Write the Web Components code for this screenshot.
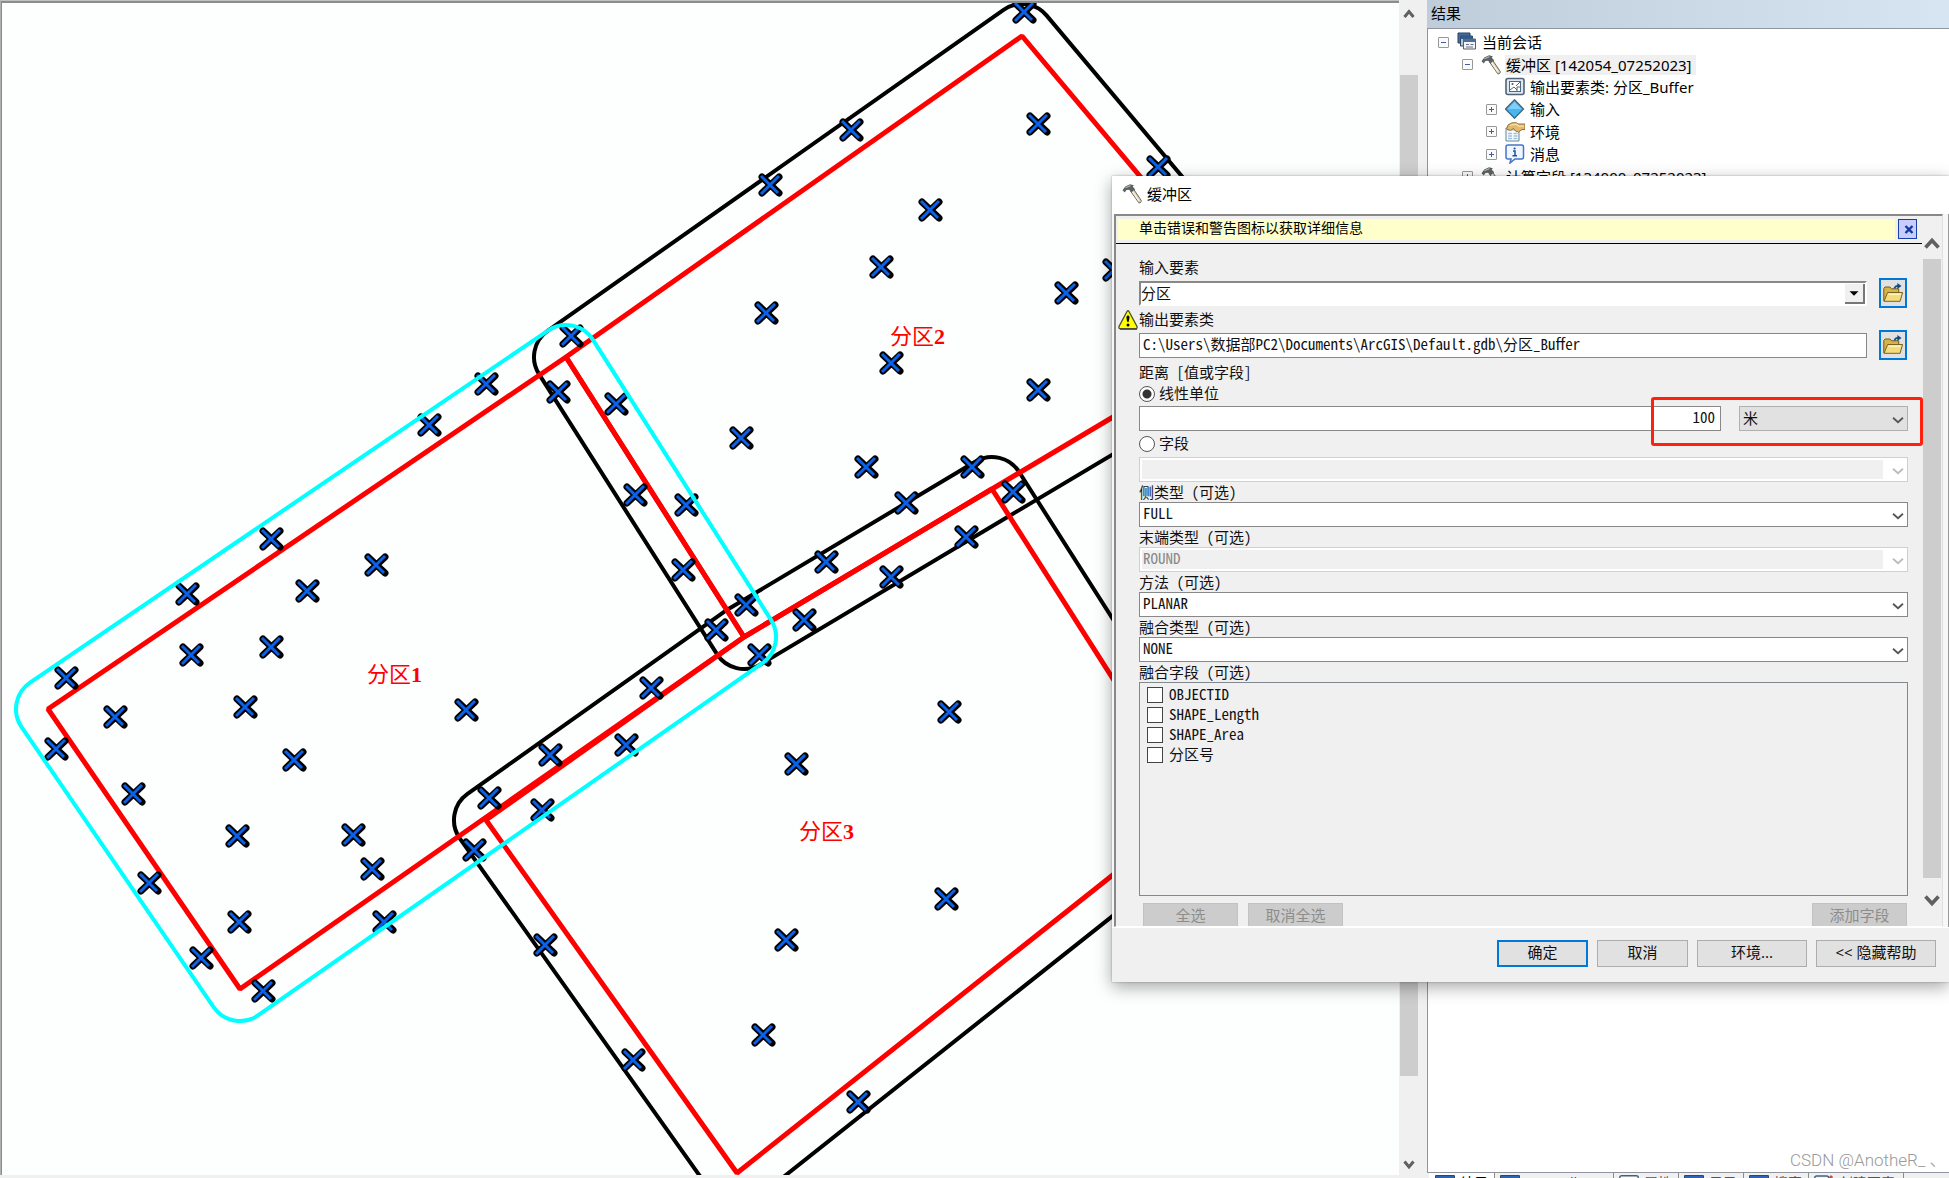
<!DOCTYPE html>
<html lang="zh-CN">
<head>
<meta charset="utf-8">
<title>缓冲区</title>
<style>
html,body{height:100%}
body{margin:0;overflow:hidden;background:#f0f0f0;color:#000;font:15px/20px "Noto Sans","Noto Sans CJK SC",sans-serif}
</style>
</head>
<body>
<gis-workspace></gis-workspace>
<script>
const define=(name,html,setup)=>customElements.define(name,class extends HTMLElement{
  connectedCallback(){
    if(this.shadowRoot)return;
    const root=this.attachShadow({mode:'open'});
    const t=document.createElement('template');
    t.innerHTML=typeof html==='function'?html(this):html;
    root.append(t.content.cloneNode(true));
    if(setup)setup(this,root);
  }
});

/* Icons */
const ICONS={
hammer:`<svg viewBox="0 0 20 20"><path d="M8.500 7l3-2L19.200 16.400c.5 1.400-.9 3-2.400 2.400z" fill="#d8cfb8" stroke="#6d6759"/><path d="M10.500 7.500l6.500 9.500" stroke="#f5f0e2" stroke-width="1.4"/><path d="M.5 6.200L3.300 2.600 8 .3l3.800 1-1 1.400 2.400 2.600-3.600 3-2.600-2.500-2.600.2-1.600 2.600z" fill="#5c6164"/><path d="M3.500 3.800L8.400 1.600" stroke="#a9b0b3" stroke-width="1.2"/></svg>`,
session:`<svg viewBox="0 0 20 20"><path d="M1 1h12v10H1z" fill="#456e9e" stroke="#27415f"/><path d="M3.500 4h12v10h-12z" fill="#b8c6d6" stroke="#33475f"/><path d="M3.500 4h12v3h-12z" fill="#2c5a91"/><path d="M6.500 7h12v10h-12z" fill="#f2f5f8" stroke="#55606b"/><path d="M6.500 7h12v3h-12z" fill="#4a6f9a"/><path d="M9 12.500h3M13.500 12.500h3M9 15h7" stroke="#66717c"/></svg>`,
feature:`<svg viewBox="0 0 20 20"><rect x="1" y="1.500" width="18" height="16" rx="2" fill="#dfe8f0" stroke="#4f6478" stroke-width="1.6"/><rect x="4.500" y="4.500" width="11" height="10" fill="#fff" stroke="#50677f"/><path d="M5 13l4-3 3 3M11 9l4-4M12 14v-4h3" fill="none" stroke="#50677f"/><circle cx="7.500" cy="7" r="1" fill="#40566c"/></svg>`,
diamond:`<svg viewBox="0 0 20 20"><path d="M9.500 .8l9 9.200-9 9.200-9-9.200z" fill="#47b5ee" stroke="#42657b" stroke-width="1.3"/><path d="M9.500 3l6.800 7H2.700z" fill="#7dcffa"/></svg>`,
env:`<svg viewBox="0 0 20 20"><path d="M1 6h13v13H1z" fill="#f7fbff" stroke="#65829d"/><path d="M1 6h13v2.500H1z" fill="#a7cbe6"/><path d="M3 11.500h4M8.500 11.500h4M3 14h4M8.500 14h4M3 16.500h4M8.500 16.500h4" stroke="#9fc3dd" stroke-width="1.3"/><path d="M1.500 7l1.500-4L7 .8h4.500L13 2h7v5.500h-3L13.500 10l-3-1-2-2.500-3 2z" fill="#e3b96c" stroke="#94703a"/><path d="M5 3.500l3-1h4l1.500 1.700h5.500" stroke="#f8e0a9" fill="none" stroke-width="1.300"/></svg>`,
info:`<svg viewBox="0 0 20 20"><path d="M3 1h13.500q2 0 2 2v10q0 2-2 2H10l-5 4 1-4H3q-2 0-2-2V3q0-2 2-2z" fill="#eef6ff" stroke="#4674c6" stroke-width="1.500"/><path d="M8 7h2v4.500M7.500 11.800h4.500" fill="none" stroke="#244f9c" stroke-width="1.500"/><circle cx="9.600" cy="4.500" r="1.100" fill="#244f9c"/></svg>`,
warn:`<svg viewBox="0 0 20 20"><path d="M9 1.500Q10 0 11 1.500l8 15q.5 2-1 2.200H2Q.5 18.500 1 16.500z" fill="#ff0" stroke="#4a4a2a" stroke-width="1.300"/><path d="M2 19.300h17" stroke="#555" stroke-width="1.300"/><path d="M10 5.500c2.600 0 1.200 4 .6 6.500H9.400C8.800 9.500 7.400 5.500 10 5.500z"/><circle cx="10" cy="15" r="1.500"/></svg>`,
folder:`<svg viewBox="0 0 20 20"><path d="M.8 18V5.500L2 4h5l1.500 1.800h7.200V9" fill="#d7b348" stroke="#705d20"/><path d="M1 18.300L4.600 9.500h15l-2.500 8.800z" fill="#f4dc7c" stroke="#776326"/><path d="M5.500 11.300h12" stroke="#fff3b5" stroke-width="1.500"/><path d="M11.500 5.500C12 3.200 13.500 2.800 15 2.800" fill="none" stroke="#15588f" stroke-width="1.800"/><path d="M14.300 0l4.200 3-4.200 3z" fill="#0d4c83"/></svg>`,
pane:`<svg viewBox="0 0 20 20"><path d="M.5 .5h19v17H.5z" fill="#f3f6f9" stroke="#33485f"/><path d="M1 1h18v5H1z" fill="#2e63b4"/></svg>`,
table:`<svg viewBox="0 0 20 20"><rect x=".7" y=".7" width="18.600" height="17" rx="2" fill="#f5fbff" stroke="#44617b" stroke-width="1.400"/><path d="M4 4h5M11 4h5" stroke="#9dc6de" stroke-width="2"/></svg>`,
edit:`<svg viewBox="0 0 20 20"><rect x=".7" y="1" width="14" height="16" rx="2" fill="#e6f3fb" stroke="#44617b" stroke-width="1.400"/><path d="M4 3v8" stroke="#5185b4" stroke-width="2"/><path d="M11 9l7-8" stroke="#c65046" stroke-width="3"/></svg>`,
chevron:`<svg viewBox="0 0 20 20"><path d="M4.500 7.500l5.500 5 5.500-5" fill="none" stroke="currentColor" stroke-width="2"/></svg>`,
up:`<svg viewBox="0 0 20 20"><path d="M5.500 13L10 7.500l4.500 5.500" fill="none" stroke="#606060" stroke-width="3"/></svg>`,
down:`<svg viewBox="0 0 20 20"><path d="M5.500 7.500L10 13l4.500-5.500" fill="none" stroke="#606060" stroke-width="3"/></svg>`,
bigup:`<svg viewBox="0 0 20 20"><path d="M3.500 14.500l6.500-7 6.500 7" fill="none" stroke="#606060" stroke-width="3.600"/></svg>`,
bigdown:`<svg viewBox="0 0 20 20"><path d="M3.500 6.500l6.500 7 6.500-7" fill="none" stroke="#606060" stroke-width="3.600"/></svg>`,
drop:`<svg viewBox="0 0 20 20"><path d="M5 8h10l-5 5z"/></svg>`,
close:`<svg viewBox="0 0 20 20"><path d="M6.500 6l7 7M13.500 6l-7 7" stroke="#103aa0" stroke-width="2.400"/></svg>`
};
define('ui-icon',el=>`<style>:host{display:block;width:20px;height:20px;flex:none}svg{display:block;width:100%;height:100%}</style>${ICONS[el.getAttribute('name')]}`);

define('scroll-bar',el=>{
  const big=el.hasAttribute('big')?'big':'';
  return `<style>
:host{display:flex;flex-direction:column;width:20px;flex:none;background:#f0f0f0}
.track{flex:1;display:flex;flex-direction:column;padding:0 1px}
.thumb{background:#cdcdcd;height:var(--thumb,100%);margin-top:var(--start,0)}
.top{padding:var(--top,2px 0)}
.bottom{padding:var(--bottom,2px 0)}
</style><div class="top"><ui-icon name="${big}up"></ui-icon></div><div class="track"><div class="thumb"></div></div><div class="bottom"><ui-icon name="${big}down"></ui-icon></div>`;
});

/* Map canvas: partitions, their buffers and the sample points */
const MARKS=[[571,336],[486,384],[558,392],[616,404],[429,425],[635,495],[686,505],[271,539],[376,565],[683,570],[1024,12],[851,130],[1038,124],[770,185],[930,210],[881,267],[766,313],[1066,293],[1114,270],[1158,167],[891,363],[1038,390],[741,438],[866,467],[972,467],[1013,492],[906,503],[966,537],[826,562],[891,577],[187,594],[307,591],[191,655],[271,647],[66,678],[115,717],[245,707],[466,710],[56,749],[294,760],[651,688],[626,745],[550,755],[133,794],[489,798],[542,810],[237,836],[353,835],[474,850],[372,869],[149,883],[239,922],[384,922],[545,945],[201,958],[263,991],[633,1060],[746,605],[804,620],[716,630],[759,655],[949,712],[796,764],[946,899],[786,940],[763,1035],[858,1102]];
const ZONE1=[[48,709],[566,357],[744,637],[240,989]];
const ZONE2=[[566,357],[1022,36],[1266,326],[992,489],[744,637]];
const ZONE3=[[486,820],[744,637],[992,489],[1196,809],[737,1173]];
const ring=z=>'M'+z.map(p=>p.join()).join('L')+'Z';
const buffer=(z,r)=>{
  let d='';
  z.forEach((p,i)=>{
    const q=z[(i+1)%z.length],dx=q[0]-p[0],dy=q[1]-p[1],n=Math.hypot(dx,dy);
    const ox=dy/n*r,oy=-dx/n*r;
    d+=(i?`A${r} ${r} 0 0 1 `:'M')+`${p[0]+ox} ${p[1]+oy}L${q[0]+ox} ${q[1]+oy}`;
    if(i===z.length-1){
      const s=z[1],ex=s[0]-q[0],ey=s[1]-q[1],m=Math.hypot(ex,ey);
      d+=`A${r} ${r} 0 0 1 ${q[0]+ey/m*r} ${q[1]-ex/m*r}Z`;
    }
  });
  return d;
};
define('map-view',()=>`<style>
:host{display:block;min-width:0;flex:1;box-sizing:border-box;border-top:1px solid #c0c0c0;border-left:1px solid #b0b0b0;margin-bottom:3px}
.frame{height:100%;box-sizing:border-box;border-top:2px solid #8c8c8c;border-left:1px solid #8c8c8c;background:#fdfefe}
svg{display:block;width:100%;height:100%}
path{fill:none}
text{fill:#f00;font:bold 22px "Liberation Serif","Noto Sans CJK SC",serif}
.cjk{font-weight:400}
</style><div class="frame"><svg aria-label="地图"><defs><g id="mark"><path d="M-8-8L9 8M9-8L-8 8" stroke="#000" stroke-width="7" stroke-linecap="round"/><path d="M-9-9L8 8M9-9L-9 9" stroke="#0b62e8" stroke-width="3"/></g></defs>
<g transform="translate(-2 -3)">
<g stroke="#000" stroke-width="4"><path d="${buffer(ZONE2,32)}"/><path d="${buffer(ZONE3,32)}"/></g>
<g stroke="#f00" stroke-width="5" stroke-linejoin="bevel"><path d="${ring(ZONE1)}"/><path d="${ring(ZONE2)}"/><path d="${ring(ZONE3)}"/></g>
${MARKS.map(m=>`<use href="#mark" x="${m[0]}" y="${m[1]}"/>`).join('')}
<path d="${buffer(ZONE1,32)}" stroke="#0ff" stroke-width="4"/>
<text x="367" y="682"><tspan class="cjk">分区</tspan>1</text><text x="890" y="344"><tspan class="cjk">分区</tspan>2</text><text x="799" y="839"><tspan class="cjk">分区</tspan>3</text>
</g></svg></div>`);

/* Results panel */
define('tree-row',el=>{
  const level=+el.getAttribute('level')||0,box=el.getAttribute('box');
  return `<style>
:host{display:flex;align-items:center;padding-left:${10+24*level}px;white-space:nowrap}
.box{width:11px;height:11px;box-sizing:border-box;border:1px solid #989898;border-radius:1px;padding:0;margin:0 8px 0 0;background:#fafafa;display:grid;place-items:center;flex:none}
.box[hidden]{display:grid;visibility:hidden}
svg{width:9px;height:9px;display:block}
.text{margin-left:4px;padding:0 4px 0 1px}
:host([selected]) .text{background:#f0f0f0}
</style><button class="box" aria-label="展开或折叠" ${box?'':'hidden'}><svg viewBox="0 0 9 9"><path d="M2 4.500h5${box==='+'?'M4.500 2v5':''}" stroke="#3f5fa5"/></svg></button><ui-icon name="${el.getAttribute('icon')}"></ui-icon><span class="text"><slot></slot></span>`;
});
define('panel-tab',el=>`<style>
:host{display:block;width:var(--w);flex:none;box-sizing:border-box;border-right:1px solid #8c8c8c;background:#f0f0f0}
:host([active]){background:#fff}
button{display:flex;gap:5px;align-items:start;width:100%;border:0;background:none;padding:2px 0 0 5px;margin:0;font:14px/15px "Noto Sans","Noto Sans CJK SC",sans-serif;color:#555;text-align:left;white-space:nowrap}
:host([active]) button{color:#000;padding-left:6px}
</style><button><ui-icon name="${el.getAttribute('icon')}"></ui-icon><span><slot></slot></span></button>`);
define('results-panel',`<style>
:host{display:flex;flex-direction:column;width:522px;flex:none;overflow:hidden;height:100%}
header{height:28px;flex:none;background:linear-gradient(90deg,#bfcddb,#d7e4f1);padding-left:4px;line-height:27px;box-sizing:border-box;font-size:15px}
.body{flex:1;min-height:0;display:flex;flex-direction:column;background:#fff;border:1px solid #8f949f;border-right:0}
.tree{display:grid;grid-template-rows:repeat(7,1fr);height:157px;padding-top:2px}
.mark{margin:auto 0 2px auto;width:159px;color:#999;font:300 17px/20px Roboto,"Noto Sans CJK SC",sans-serif;white-space:nowrap}
nav{display:flex;height:5px;flex:none;overflow:hidden;padding-left:2px}
</style>
<header>结果</header>
<div class="body"><div class="tree">
<tree-row box="-" icon="session">当前会话</tree-row>
<tree-row level="1" box="-" icon="hammer" selected>缓冲区 [142054_07252023]</tree-row>
<tree-row level="2" icon="feature">输出要素类: 分区_Buffer</tree-row>
<tree-row level="2" box="+" icon="diamond">输入</tree-row>
<tree-row level="2" box="+" icon="env">环境</tree-row>
<tree-row level="2" box="+" icon="info">消息</tree-row>
<tree-row level="1" box="+" icon="hammer">计算字段 [134000_07252023]</tree-row>
</div><div class="mark">CSDN @AnotheR_ 、</div></div>
<nav>
<panel-tab active icon="pane" style="--w:66px">结果</panel-tab>
<panel-tab icon="pane" style="--w:119px">ArcToolbox</panel-tab>
<panel-tab icon="table" style="--w:65px">属性</panel-tab>
<panel-tab icon="pane" style="--w:65px">目录</panel-tab>
<panel-tab icon="pane" style="--w:65px">搜索</panel-tab>
<panel-tab icon="edit" style="--w:95px">创建要素</panel-tab>
</nav>`);

/* Form controls of the tool dialog */
const FORM=`
*{box-sizing:border-box}
label,input,select,button{font:15px/20px "Noto Sans CJK SC",sans-serif;font-feature-settings:"hwid";color:#111}
label{white-space:nowrap;padding-bottom:2px}
input,select{margin:0;border-radius:0;outline:0;appearance:none}
`;
define('drop-down',el=>{
  const dis=el.hasAttribute('disabled')?'disabled':'',label=el.getAttribute('label');
  return `<style>${FORM}
:host{display:block;flex:1;min-width:0}
label{display:block;line-height:16px;height:18px}
.hold{display:grid;align-items:center}
select{grid-area:1/1;width:100%;height:25px;border:1px solid #888;background:#fff;padding:0 26px 4px 3px;line-height:19px}
ui-icon{grid-area:1/1;justify-self:end;margin-right:1px;margin-top:2px;pointer-events:none;color:#555;width:18px}
select:disabled{opacity:1;color:#888;border-color:#d0d0d0;background:linear-gradient(#f0f0f0,#f0f0f0) 2px 2px/calc(100% - 26px) 19px no-repeat #fff}
select:disabled+ui-icon{color:#bbb}
:host([tone=grey]) select{background:#e1e1e1;border-color:#b0b0b0;padding-bottom:2px}
:host([tone=classic]) select{border:2px solid #888;border-right-color:#fff;border-bottom-color:#fff;padding:0 26px 2px 0}
:host([tone=classic]) ui-icon{background:#f0f0f0;border-right:2px solid #777;border-bottom:2px solid #777;width:20px;margin:0 2px 0 0;color:#000}
</style>${label?`<label for="s">${label}</label>`:''}<div class="hold"><select id="s" aria-label="${label||el.getAttribute('name')}" ${dis}><option>${el.getAttribute('value')||''}</option></select><ui-icon name="${el.getAttribute('tone')==='classic'?'drop':'chevron'}"></ui-icon></div>`;
});
define('push-button',el=>`<style>${FORM}
:host{display:block;width:var(--w);flex:none}
button{width:100%;height:27px;border:1px solid #adadad;background:#e1e1e1;padding:0 0 3px;display:block;white-space:nowrap;font-feature-settings:normal;font-family:"Noto Sans","Noto Sans CJK SC",sans-serif}
:host([primary]) button{border:2px solid #0078d7}
button:disabled{background:#ccc;border-color:#c2c2c2;color:#8c8c8c}
</style><button ${el.hasAttribute('disabled')?'disabled':''}><slot></slot></button>`);
define('browse-button',`<style>
:host{display:block;flex:none;width:28px;margin:-4px 1px -3px 0}
button{width:28px;height:30px;border:2px solid #0078d7;background:#e1e1e1;padding:0;display:grid;place-items:center}
</style><button aria-label="浏览"><ui-icon name="folder"></ui-icon></button>`);

define('buffer-form',`<style>${FORM}
:host{display:block;padding:14px 14px 0 23px}
.label{display:flex;align-items:center;height:20px}
.row{display:flex;align-items:center;height:25px}
.row.a{margin:3px 0 4px;gap:12px}
.row.b{margin:3px 0 5px;gap:12px}
.row input{flex:1;min-width:0;height:25px;border:1px solid #888;background:#fff;padding:0 5px 4px 3px}
.num{text-align:right}
.warn{margin-left:-21px;margin-right:1px}
.radio{display:flex;align-items:center;gap:4px;height:20px}
.radio input{width:16px;height:16px;border:1px solid #555;border-radius:50%;background:#fff}
.radio input:checked{background:radial-gradient(circle,#333 4px,#fff 5px)}
.radio.first{margin-top:1px}
.dist{position:relative;margin:2px 0 3px;gap:18px}
.dist drop-down{flex:0 0 169px}
.ring{position:absolute;right:-15px;top:-9px;width:272px;height:49px;border:3px solid #ff2010;border-radius:3px;pointer-events:none}
.field{margin:3px 0 2px}
.stack{display:flex;flex-direction:column;gap:2px}
.cap{display:block;line-height:16px;padding-bottom:2px}
.list{border:1px solid #828790;height:214px;margin:0;padding:2px 7px}
.check{display:flex;align-items:center;gap:6px;height:20px}
.check input{width:16px;height:16px;border:1px solid #444;background:#fff}
.acts{display:flex;gap:10px;padding:7px 1px 0 4px}
.acts :last-child{margin-left:auto}
</style>
<label class="label">输入要素</label>
<div class="row a"><drop-down tone="classic" name="输入要素" value="分区"></drop-down><browse-button></browse-button></div>
<div class="label"><ui-icon class="warn" name="warn"></ui-icon><label for="out">输出要素类</label></div>
<div class="row b"><input id="out" value="C:\\Users\\数据部PC2\\Documents\\ArcGIS\\Default.gdb\\分区_Buffer"><browse-button></browse-button></div>
<label class="label" for="num">距离 [值或字段]</label>
<div class="radio first"><input type="radio" name="d" id="r1" checked><label for="r1">线性单位</label></div>
<div class="row dist"><input class="num" id="num" value="100"><drop-down tone="grey" name="单位" value="米"></drop-down><span class="ring"></span></div>
<div class="radio"><input type="radio" name="d" id="r2"><label for="r2">字段</label></div>
<drop-down class="field" name="字段" disabled></drop-down>
<div class="stack">
<drop-down label="侧类型 (可选)" value="FULL"></drop-down>
<drop-down label="末端类型 (可选)" value="ROUND" disabled></drop-down>
<drop-down label="方法 (可选)" value="PLANAR"></drop-down>
<drop-down label="融合类型 (可选)" value="NONE"></drop-down>
<div><div><label class="cap" for="c1">融合字段 (可选)</label></div>
<div class="list" role="group" aria-label="融合字段">
<div class="check"><input type="checkbox" id="c1"><label for="c1">OBJECTID</label></div>
<div class="check"><input type="checkbox" id="c2"><label for="c2">SHAPE_Length</label></div>
<div class="check"><input type="checkbox" id="c3"><label for="c3">SHAPE_Area</label></div>
<div class="check"><input type="checkbox" id="c4"><label for="c4">分区号</label></div>
</div></div>
</div>
<div class="acts"><push-button disabled style="--w:95px">全选</push-button><push-button disabled style="--w:95px">取消全选</push-button><push-button disabled style="--w:95px">添加字段</push-button></div>`);

define('tool-dialog',`<style>
:host{display:flex;flex-direction:column;background:#f0f0f0;box-shadow:0 5px 16px rgba(0,0,0,.35),0 0 2px rgba(0,0,0,.3)}
header{height:38px;box-sizing:border-box;flex:none;background:#fff;display:flex;align-items:center;gap:5px;padding:0 0 2px 10px}
.wrap{display:flex;height:713px;background:#f7f7f7;padding-left:2px}
.body{flex:1;min-width:0;display:flex;border-left:2px solid #888;border-top:2px solid #888;border-right:1px solid #e0e0e0;border-bottom:1px solid #fff;background:#f0f0f0;overflow:hidden;box-sizing:border-box}
.side{width:4px;margin-left:1px;border-right:1px solid #999}
.main{flex:1;min-width:0}
.note{display:flex;padding:3px 5px 3px 2px;height:21px;border-bottom:1px solid #000;gap:3px}
.note span{flex:1;background:#ffc;padding-left:21px;font:14px/17px "Noto Sans CJK SC",sans-serif}
.note button{width:19px;height:20px;border:1px solid #1640a8;background:#c8ccff;padding:0;display:grid;place-items:center}
scroll-bar{--top:17px 0 5px;--start:1px;--thumb:619px;--bottom:6px 0 16px}
footer{height:55px;display:flex;gap:9px;justify-content:flex-end;padding:12px 13px 0 0;box-sizing:border-box;border-top:1px solid #fff}
</style>
<header><ui-icon name="hammer"></ui-icon><span>缓冲区</span></header>
<div class="wrap"><div class="body"><div class="main"><div class="note"><span>单击错误和警告图标以获取详细信息</span><button aria-label="关闭"><ui-icon name="close"></ui-icon></button></div><buffer-form></buffer-form></div><scroll-bar big></scroll-bar></div><div class="side"></div></div>
<footer><push-button primary style="--w:91px">确定</push-button><push-button style="--w:91px">取消</push-button><push-button style="--w:110px">环境...</push-button><push-button style="--w:120px">&lt;&lt; 隐藏帮助</push-button></footer>`);

define('gis-workspace',`<style>
:host{display:flex;height:100vh;position:relative;overflow:hidden}
.map-scroll{margin:2px 8px 2px 0;--start:49px;--thumb:1001px}
tool-dialog{position:absolute;right:0;top:176px;width:837px}
</style>
<map-view></map-view><scroll-bar class="map-scroll"></scroll-bar><results-panel></results-panel>
<tool-dialog></tool-dialog>`);
</script>
</body>
</html>
